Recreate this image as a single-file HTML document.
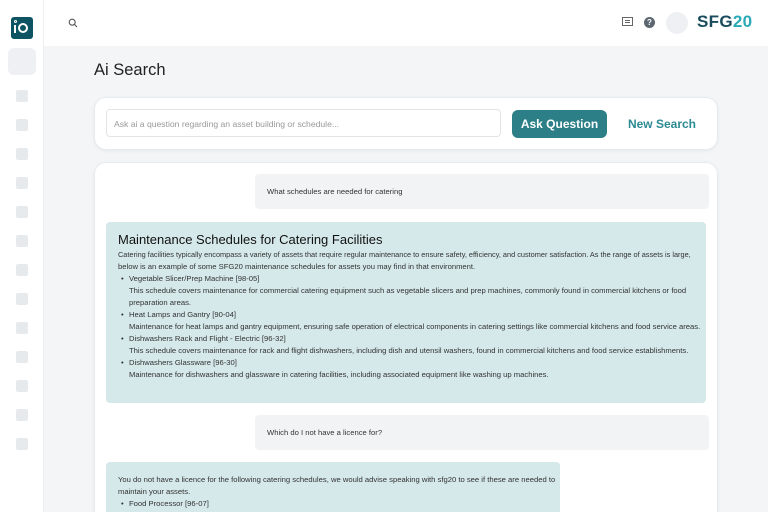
<html><head><style>
*{margin:0;padding:0;box-sizing:border-box}
html,body{width:768px;height:512px;overflow:hidden}
body{background:#f3f5f7;font-family:"Liberation Sans",sans-serif;position:relative;color:#222}
.a{position:absolute}
.sb{left:0;top:0;width:44px;height:512px;background:#fff;border-right:1px solid #eceef0}
.tb{left:44px;top:0;width:724px;height:46px;background:#fff}
.sq{left:16px;width:12px;height:12px;background:#e7eaed;border-radius:2px}
.card{background:#fff;border-radius:12px;box-shadow:0 1px 3px rgba(0,0,0,.06);border:1px solid #e8ebee}
.t{font-size:7.65px;line-height:12px;color:#333}
ul{list-style:none}
li:before{content:"•";position:absolute;margin-left:-8px}
.nw{white-space:nowrap}
</style></head><body>
<div class="a sb"></div>
<div class="a" style="left:11px;top:17px;width:22px;height:22px;background:#0d5361;border-radius:3px"></div>
<div class="a" style="left:14px;top:20px;width:3px;height:3px;border:1px solid #fff;border-radius:50%"></div>
<div class="a" style="left:14px;top:25px;width:2px;height:8px;background:#fff"></div>
<div class="a" style="left:18px;top:23px;width:10px;height:10px;border:2.5px solid #fff;border-radius:50%"></div>
<div class="a" style="left:8px;top:48px;width:28px;height:27px;background:#eef0f3;border-radius:6px"></div>
<div class="a sq" style="top:90px"></div><div class="a sq" style="top:119px"></div><div class="a sq" style="top:148px"></div><div class="a sq" style="top:177px"></div><div class="a sq" style="top:206px"></div><div class="a sq" style="top:235px"></div><div class="a sq" style="top:264px"></div><div class="a sq" style="top:293px"></div><div class="a sq" style="top:322px"></div><div class="a sq" style="top:351px"></div><div class="a sq" style="top:380px"></div><div class="a sq" style="top:409px"></div><div class="a sq" style="top:438px"></div>
<div class="a tb"></div>
<svg class="a" style="left:68px;top:18px" width="10" height="10" viewBox="0 0 10 10"><circle cx="4.2" cy="4.2" r="3" fill="none" stroke="#555" stroke-width="1.1"/><path d="M6.4 6.4L9 9" stroke="#555" stroke-width="1.1"/></svg>
<svg class="a" style="left:622px;top:17px" width="11" height="10" viewBox="0 0 11 10"><rect x="0.5" y="0.5" width="10" height="8" fill="none" stroke="#666" stroke-width="1"/><path d="M3 3.5h5M3 5.5h5" stroke="#666"/></svg>
<div class="a" style="left:644px;top:17px;width:11px;height:11px;border-radius:50%;background:#5b6670;color:#fff;font-size:8px;font-weight:bold;text-align:center;line-height:11px">?</div>
<div class="a" style="left:666px;top:12px;width:22px;height:22px;border-radius:50%;background:#eef0f3"></div>
<div class="a" style="left:697px;top:12px;font-size:17px;font-weight:bold;color:#1b4c5e;letter-spacing:.3px">SFG<span style="color:#2aa9b6">20</span></div>
<div class="a" style="left:94px;top:61px;font-size:16.5px;color:#222">Ai Search</div>
<div class="a card" style="left:94px;top:97px;width:624px;height:53px"></div>
<div class="a" style="left:106px;top:109px;width:395px;height:28px;border:1px solid #e2e5e8;border-radius:4px;background:#fff;font-size:8.6px;color:#999;padding:9px 7px">Ask ai a question regarding an asset building or schedule...</div>
<div class="a" style="left:512px;top:110px;width:95px;height:28px;background:#2c7f87;border-radius:6px;color:#fff;font-size:12px;font-weight:bold;text-align:center;line-height:28px">Ask Question</div>
<div class="a" style="left:618px;top:117px;width:88px;text-align:center;font-size:12px;font-weight:bold;color:#2c8a92">New Search</div>
<div class="a card" style="left:94px;top:162px;width:624px;height:370px"></div>
<div class="a t" style="left:255px;top:174px;width:454px;height:35px;background:#f2f3f5;border-radius:4px;padding:12px 12px">What schedules are needed for catering</div>
<div class="a t" style="left:106px;top:222px;width:600px;height:181px;background:#d5e8ea;border-radius:4px;padding:10px 4px 10px 12px">
<div style="font-size:13px;line-height:16px;color:#111;margin-bottom:1px">Maintenance Schedules for Catering Facilities</div>
<div class="nw" style="font-size:7.35px">Catering facilities typically encompass a variety of assets that require regular maintenance to ensure safety, efficiency, and customer satisfaction. As the range of assets is large,</div>
<div class="nw">below is an example of some SFG20 maintenance schedules for assets you may find in that environment.</div>
<ul style="padding-left:11px">
<li>Vegetable Slicer/Prep Machine [98-05]<br>This schedule covers maintenance for commercial catering equipment such as vegetable slicers and prep machines, commonly found in commercial kitchens or food preparation areas.</li>
<li>Heat Lamps and Gantry [90-04]<br>Maintenance for heat lamps and gantry equipment, ensuring safe operation of electrical components in catering settings like commercial kitchens and food service areas.</li>
<li>Dishwashers Rack and Flight - Electric [96-32]<br>This schedule covers maintenance for rack and flight dishwashers, including dish and utensil washers, found in commercial kitchens and food service establishments.</li>
<li>Dishwashers Glassware [96-30]<br>Maintenance for dishwashers and glassware in catering facilities, including associated equipment like washing up machines.</li>
</ul></div>
<div class="a t" style="left:255px;top:415px;width:454px;height:35px;background:#f2f3f5;border-radius:4px;padding:12px 12px">Which do I not have a licence for?</div>
<div class="a t" style="left:106px;top:462px;width:454px;height:60px;background:#d5e8ea;border-radius:4px;padding:12px 4px 12px 12px">You do not have a licence for the following catering schedules, we would advise speaking with sfg20 to see if these are needed to maintain your assets.
<ul style="padding-left:11px"><li>Food Processor [96-07]</li></ul></div>
</body></html>
